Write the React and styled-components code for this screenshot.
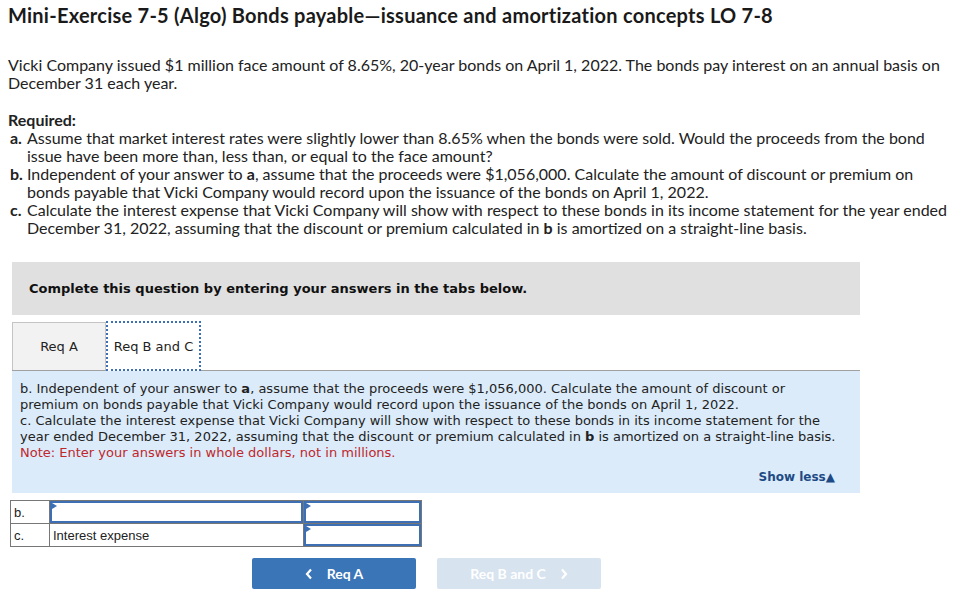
import React from 'react';
import styled, {createGlobalStyle} from 'styled-components';

const Global = createGlobalStyle`
	body {
		margin: 0;
		background: #fff;
		color: #222;
		font-family: Lato, 'Open Sans', sans-serif;
	}
`;

const Page = styled.div`
	padding: 3px 8px 0 8px;
	width: 948px;
`;

const Title = styled.h1`
	margin: 0;
	font-size: 20px;
	line-height: 24px;
	letter-spacing: 0.25px;
	font-weight: 700;
	color: #1a1a1a;
`;

const Intro = styled.p`
	margin: 29px 0 0 0;
	font-size: 16px;
	line-height: 18px;
`;

const Required = styled.div`
	margin-top: 19px;
	font-size: 16px;
	line-height: 18px;
	font-weight: 700;
`;

const Item = styled.div`
	display: flex;
	font-size: 16px;
	line-height: 18px;
	padding-left: 2px;
`;

const Letter = styled.b`
	width: 17px;
	flex: none;
`;

const Question = styled.div`
	margin: 25px 0 0 4px;
	width: 848px;
	height: 53px;
	background: #e0e0e0;
	display: flex;
	align-items: center;
	padding-left: 17px;
	box-sizing: border-box;
	font-family: 'DejaVu Sans', Verdana, sans-serif;
	font-size: 13px;
	font-weight: 700;
	color: #111;
`;

const Tabs = styled.div`
	margin: 6px 0 0 4px;
	width: 848px;
	display: flex;
	align-items: flex-end;
	border-bottom: 1px solid #a0a0a0;
	height: 49px;
`;

const Tab = styled.div`
	box-sizing: border-box;
	height: ${p => (p.active ? '50px' : '48px')};
	margin-bottom: ${p => (p.active ? '-1px' : '0')};
	width: ${p => (p.active ? '95px' : '94px')};
	display: flex;
	align-items: center;
	justify-content: center;
	font-family: 'DejaVu Sans', Verdana, sans-serif;
	font-size: 13px;
	color: #222;
	background: ${p => (p.active ? '#fff' : '#f2f2f2')};
	border: ${p => (p.active ? '2px dotted #3c6fb3' : '1px solid #c4c4c4')};
	border-bottom: ${p => (p.active ? '2px dotted #3c6fb3' : 'none')};
`;

const Panel = styled.div`
	margin-left: 4px;
	width: 848px;
	height: 122px;
	box-sizing: border-box;
	background: #dbebf9;
	padding: 10px 18px 0 8px;
	display: flex;
	flex-direction: column;
	font-family: 'DejaVu Sans', Verdana, sans-serif;
	font-size: 13px;
	line-height: 16px;
	color: #222;
`;

const Note = styled.div`
	color: #c0272d;
`;

const ShowLess = styled.div`
	margin-top: auto;
	margin-bottom: 8px;
	align-self: flex-end;
	margin-right: 7px;
	font-weight: 700;
	font-size: 12px;
	color: #1d4a85;
`;

const Table = styled.table`
	margin: 7px 0 0 2px;
	border-collapse: collapse;
	font-family: 'Liberation Sans', Arial, sans-serif;
	font-size: 13px;
	color: #222;
`;

const Cell = styled.td`
	border: 1px solid #777;
	height: 22px;
	padding: 0 3px;
	width: ${p => p.w}px;
	box-sizing: border-box;
`;

const InputCell = styled.td`
	border: 1px solid #777;
	padding: 0;
	width: ${p => p.w}px;
	height: 22px;
	position: relative;
	&::before {
		content: '';
		position: absolute;
		inset: 0;
		border: 2px solid #3c6fb3;
	}
	&::after {
		content: '';
		position: absolute;
		left: 2px;
		top: 2px;
		border-left: 5px solid #3c6fb3;
		border-top: 3px solid transparent;
		border-bottom: 3px solid transparent;
	}
`;

const Nav = styled.div`
	margin: 11px 0 0 244px;
	display: flex;
	gap: 21px;
`;

const NavButton = styled.div`
	width: 164px;
	height: 31px;
	border-radius: 2px;
	display: flex;
	align-items: center;
	justify-content: center;
	gap: 14px;
	font-size: 14px;
	font-weight: 700;
	color: #fff;
	background: ${p => (p.disabled ? '#d8e3f0' : '#3a75b8')};
`;

const Chevron = ({dir}) => (
	<svg width="8" height="12" viewBox="0 0 8 12">
		<path
			d={dir === 'left' ? 'M6 1.5 L2 6 L6 10.5' : 'M2 1.5 L6 6 L2 10.5'}
			fill="none"
			stroke="#fff"
			strokeWidth="2.2"
		/>
	</svg>
);

export default function App() {
	return (
		<Page>
			<Global />
			<Title>Mini-Exercise 7-5 (Algo) Bonds payable—issuance and amortization concepts LO 7-8</Title>
			<Intro>
				Vicki Company issued $1 million face amount of 8.65%, 20-year bonds on April 1, 2022. The bonds pay interest on an annual basis on December 31 each year.
			</Intro>
			<Required>Required:</Required>
			<Item>
				<Letter>a.</Letter>
				<span>Assume that market interest rates were slightly lower than 8.65% when the bonds were sold. Would the proceeds from the bond issue have been more than, less than, or equal to the face amount?</span>
			</Item>
			<Item>
				<Letter>b.</Letter>
				<span>Independent of your answer to <b>a</b>, assume that the proceeds were $1,056,000. Calculate the amount of discount or premium on bonds payable that Vicki Company would record upon the issuance of the bonds on April 1, 2022.</span>
			</Item>
			<Item>
				<Letter>c.</Letter>
				<span>Calculate the interest expense that Vicki Company will show with respect to these bonds in its income statement for the year ended December 31, 2022, assuming that the discount or premium calculated in <b>b</b> is amortized on a straight-line basis.</span>
			</Item>

			<Question>Complete this question by entering your answers in the tabs below.</Question>

			<Tabs>
				<Tab>Req A</Tab>
				<Tab active>Req B and C</Tab>
			</Tabs>

			<Panel>
				<div>
					b. Independent of your answer to <b>a</b>, assume that the proceeds were $1,056,000. Calculate the amount of discount or premium on bonds payable that Vicki Company would record upon the issuance of the bonds on April 1, 2022.
				</div>
				<div>
					c. Calculate the interest expense that Vicki Company will show with respect to these bonds in its income statement for the year ended December 31, 2022, assuming that the discount or premium calculated in <b>b</b> is amortized on a straight-line basis.
				</div>
				<Note>Note: Enter your answers in whole dollars, not in millions.</Note>
				<ShowLess>Show less▲</ShowLess>
			</Panel>

			<Table>
				<tbody>
					<tr>
						<Cell w={39}>b.</Cell>
						<InputCell w={253} />
						<InputCell w={117} />
					</tr>
					<tr>
						<Cell w={39}>c.</Cell>
						<Cell w={253}>Interest expense</Cell>
						<InputCell w={117} />
					</tr>
				</tbody>
			</Table>

			<Nav>
				<NavButton>
					<Chevron dir="left" />
					<span>Req A</span>
				</NavButton>
				<NavButton disabled>
					<span>Req B and C</span>
					<Chevron dir="right" />
				</NavButton>
			</Nav>
		</Page>
	);
}
